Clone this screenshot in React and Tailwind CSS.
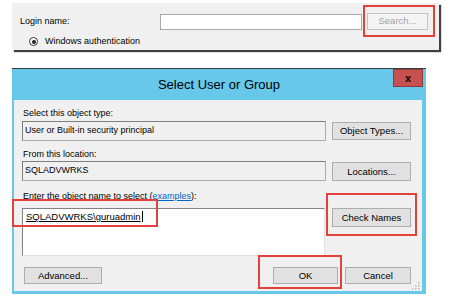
import React from 'react';

const btn = 'flex items-center justify-center bg-[#e1e1e1] border border-[#adadad] text-[9.5px] text-black leading-none';
const field = 'bg-[#f0f0f0] border border-[#a9a9a9] border-t-[#7f7f7f] border-l-[#7f7f7f] flex items-center pl-[2px] text-[9px] text-black';

const RedBox = ({ className }) => (
	<div className={`absolute border-2 border-[#e2413c] pointer-events-none ${className}`} />
);

const Grip = () => (
	<svg width="8" height="8" viewBox="0 0 8 8" className="absolute right-[2px] bottom-[1px]">
		{[[6, 0], [6, 3], [3, 3], [6, 6], [3, 6], [0, 6]].map(([x, y]) => (
			<rect key={`${x}-${y}`} x={x} y={y} width="1.5" height="1.5" fill="#b8b8b8" />
		))}
	</svg>
);

export default function App() {
	return (
		<div className="w-[456px] h-[301px] bg-white overflow-hidden text-black" style={{ fontFamily: '"Liberation Sans", Arial, sans-serif' }}>
			{/* login panel strip */}
			<div className="relative mt-[3px] ml-[12px] w-[427px] h-[47px] bg-[#f0f0f0] shadow-[2px_2px_1px_rgba(0,0,0,0.75)]">
				<div className="flex items-center pt-[10px]">
					<div className="w-[148px] pl-[8px] text-[9px]">Login name:</div>
					<div className="w-[202px] h-[16px] bg-white border border-[#a9a9a9]" />
					<div className="ml-[5px] w-[61px] h-[17px] flex items-center justify-center bg-[#f4f4f4] border border-[#c4c4c4] text-[9.5px] text-[#a3a3a3]">
						Search...
					</div>
				</div>
				<div className="flex items-center mt-[7px] pl-[17px]">
					<div className="w-[9px] h-[9px] rounded-full border border-[#333] bg-white flex items-center justify-center">
						<div className="w-[4px] h-[4px] rounded-full bg-[#222]" />
					</div>
					<span className="ml-[7px] text-[9px] leading-none">Windows authentication</span>
				</div>
				<RedBox className="left-[351px] top-[2px] w-[72px] h-[32px]" />
			</div>

			{/* Select User or Group dialog */}
			<div className="mt-[18px] ml-[12px] w-[414px] h-[226px] bg-[#67c8ea] flex flex-col">
				<div className="relative h-[32px] border-t border-[#3a3a3a] flex items-center justify-center text-[13px]">
					Select User or Group
					<div className="absolute right-[3px] top-0 w-[30px] h-[18px] bg-[#c75050] border border-[#8e3b3b] flex items-center justify-center text-[11px] font-bold leading-none">
						x
					</div>
				</div>
				<div className="relative flex-1 ml-[2px] mr-[4px] mb-[3px] bg-[#f0f0f0] flex flex-col">
					<div className="pt-[8px] pl-[9px] h-[19px] text-[9px] leading-[11px]">Select this object type:</div>
					<div className="flex items-start mt-[2px] ml-[8px]">
						<div className={`${field} w-[304px] h-[20px]`}>User or Built-in security principal</div>
						<div className={`${btn} ml-[6px] mt-[1px] w-[79px] h-[18px]`}>Object Types...</div>
					</div>

					<div className="mt-[8px] pl-[9px] h-[11px] text-[9px] leading-[11px]">From this location:</div>
					<div className="flex items-start mt-[1px] ml-[8px]">
						<div className={`${field} w-[304px] h-[20px]`}>SQLADVWRKS</div>
						<div className={`${btn} ml-[6px] mt-[1px] w-[79px] h-[19px]`}>Locations...</div>
					</div>

					<div className="mt-[10px] pl-[9px] h-[11px] text-[9px] leading-[11px]">
						Enter the object name to select (<span className="text-[#0066cc] underline">examples</span>):
					</div>
					<div className="flex items-start mt-[6px] ml-[8px]">
						<div className="w-[303px] h-[48px] bg-white border border-[#e3e3e3] border-t-[#828282] border-l-[#828282]">
							<div className="flex items-center h-[13px] mt-[1px] pl-[3px]">
								<span className="text-[9.5px] underline leading-[13px]">SQLADVWRKS\guruadmin</span>
								<span className="w-[1px] h-[11px] bg-black ml-[1px]" />
							</div>
						</div>
						<div className={`${btn} ml-[7px] w-[79px] h-[19px]`}>Check Names</div>
					</div>

					<div className="flex items-center justify-between mt-[11px] ml-[10px] mr-[11px]">
						<div className={`${btn} w-[78px] h-[17px]`}>Advanced...</div>
						<div className="flex gap-[7px]">
							<div className={`${btn} w-[65px] h-[17px] border-[#4d8fc7]`}>OK</div>
							<div className={`${btn} w-[66px] h-[17px]`}>Cancel</div>
						</div>
					</div>

					<Grip />
					<RedBox className="left-[-2px] top-[99px] w-[146px] h-[28px]" />
					<RedBox className="left-[312px] top-[93px] w-[91px] h-[43px]" />
					<RedBox className="left-[244px] top-[155px] w-[84px] h-[34px]" />
				</div>
			</div>
		</div>
	);
}
